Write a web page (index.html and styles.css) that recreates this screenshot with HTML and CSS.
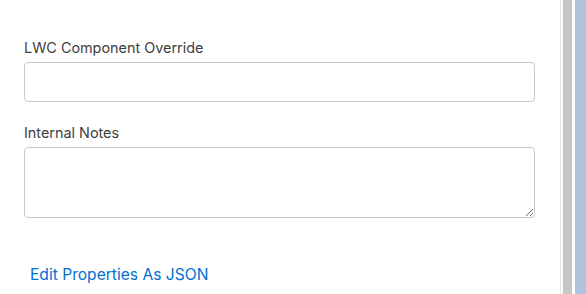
FILE: index.html
```html
<!DOCTYPE html>
<html>
<head>
<meta charset="utf-8">
<link rel="stylesheet" href="styles.css">
</head>
<body>
<div class="page">
  <div class="panel">
    <div class="field field-first">
      <label class="label" for="lwc">LWC Component Override</label>
      <input class="input" id="lwc" type="text">
    </div>
    <div class="field">
      <label class="label" for="notes">Internal Notes</label>
      <textarea class="textarea" id="notes"></textarea>
    </div>
    <div class="actions">
      <a class="link" href="#">Edit Properties As JSON</a>
    </div>
  </div>
  <div class="edge-line"></div>
  <div class="edge-gap"></div>
  <div class="edge-gray"></div>
  <div class="edge-white"></div>
  <div class="edge-blue"></div>
</div>
</body>
</html>
```

FILE: styles.css
```css
html, body {
  margin: 0;
  padding: 0;
  background: #ffffff;
}
.page {
  display: flex;
  width: 586px;
  height: 294px;
  overflow: hidden;
  font-family: Inter, "Liberation Sans", sans-serif;
  font-size: 14.4px;
  line-height: 20px;
}
.panel {
  flex: 1;
  padding: 38px 25px 0 24px;
  display: flex;
  flex-direction: column;
}
.field {
  display: flex;
  flex-direction: column;
  margin-top: 21px;
}
.field-first {
  margin-top: 0;
}
.label {
  color: #3e3e3c;
  margin-bottom: 4px;
}
.input {
  box-sizing: border-box;
  height: 40px;
  width: 511px;
  border: 1px solid #c9c9c9;
  border-radius: 4px;
  margin: 0;
  padding: 0 12px;
  font: inherit;
  outline: none;
}
.textarea {
  box-sizing: border-box;
  height: 71px;
  width: 511px;
  border: 1px solid #c9c9c9;
  border-radius: 4px;
  margin: 0;
  padding: 8px 12px;
  font: inherit;
  outline: none;
  resize: vertical;
}
.actions {
  margin-top: 47px;
  padding-left: 6px;
}
.link {
  color: #0070d2;
  text-decoration: none;
  font-size: 15.6px;
}
.edge-line {
  width: 1px;
  background: #e9e9e9;
}
.edge-gap {
  width: 2px;
  background: #ffffff;
}
.edge-gray {
  width: 9px;
  background: #c6c6c6;
}
.edge-white {
  width: 3px;
  background: #ffffff;
}
.edge-blue {
  width: 11px;
  background: #b0c4de;
}
```
